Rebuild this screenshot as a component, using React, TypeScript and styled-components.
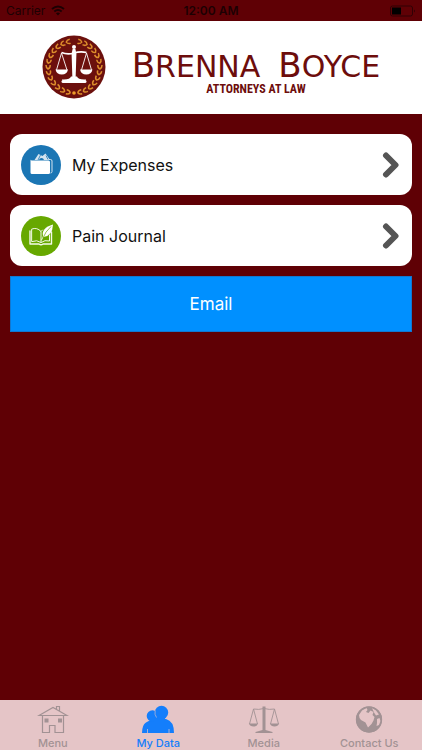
import React from "react";
import styled, { createGlobalStyle } from "styled-components";

const GlobalStyle = createGlobalStyle`
  * { box-sizing: border-box; }
  body { margin: 0; background: #5f0005; font-family: Inter, "Liberation Sans", sans-serif; }
  svg { display: block; flex: none; }
`;

const Screen = styled.div`
  min-height: 100vh;
  display: flex;
  flex-direction: column;
  background: #5f0005;
`;

const StatusBar = styled.div`
  display: grid;
  grid-template-columns: 1fr auto 1fr;
  align-items: center;
  height: 21px;
  padding: 0 6px;
  font-size: 12px;
  line-height: 20px;
  color: #1c0003;
`;

const Carrier = styled.div`
  display: flex;
  align-items: center;
  gap: 6px;
`;

const Clock = styled.time`
  font-weight: 600;
`;

const Battery = styled.div`
  justify-self: end;
`;

const Header = styled.header`
  display: flex;
  align-items: flex-start;
  justify-content: center;
  gap: 26px;
  padding: 14px 0 15px;
  background: #fff;
`;

const Brand = styled.div`
  display: flex;
  flex-direction: column;
  align-items: center;
  padding-top: 15px;
  color: #6d0d0c;
`;

const BrandName = styled.h1`
  display: flex;
  gap: 18px;
  margin: 0;
  font: 400 30px/30px "DejaVu Sans", sans-serif;
`;

const Initial = styled.span`
  font-size: 34px;
`;

const Tagline = styled.p`
  margin: 0;
  font: 700 12px/14px "Roboto Condensed", "Open Sans Condensed", Roboto, sans-serif;
`;

const Content = styled.main`
  flex: 1;
  display: flex;
  flex-direction: column;
  gap: 10px;
  padding: 20px 10px;
`;

const Card = styled.button`
  display: flex;
  align-items: center;
  gap: 11px;
  height: 61px;
  padding: 0 12px 0 11px;
  border: 0;
  border-radius: 12px;
  background: #fff;
  color: #111;
  font: 400 16px/20px Inter, sans-serif;
  text-align: left;
`;

const CardLabel = styled.span`
  flex: 1;
`;

const EmailButton = styled.button`
  height: 56px;
  border: 1px solid #1277cf;
  background: #0090ff;
  color: #fff;
  font: 400 17px/20px Inter, sans-serif;
`;

const TabBar = styled.nav`
  display: grid;
  grid-template-columns: repeat(4, 1fr);
  height: 50px;
  background: #e5c5c7;
`;

const Tab = styled.a<{ $active?: boolean }>`
  display: flex;
  flex-direction: column;
  align-items: center;
  gap: 2px;
  padding-top: 4px;
  color: ${(p) => (p.$active ? "#147efb" : "#a29294")};
  font-size: 11px;
  font-weight: 500;
  line-height: 14px;
  text-decoration: none;
`;

const leaves = Array.from({ length: 28 }, (_, i) => i).filter((i) => i !== 0 && i !== 14);

const SealIcon = () => (
  <svg width="64" height="64" viewBox="0 0 64 64" aria-hidden="true">
    <circle cx="32" cy="32" r="31.5" fill="#6c100d" />
    {leaves.map((i) => {
      const angle = (i * 360) / 28;
      const side = i < 14 ? 1 : -1;
      return (
        <g key={i} transform={`rotate(${angle} 32 32)`}>
          <path
            d={`M${32 - side * 2} 4Q${32 + side * 1} 4 ${32 + side * 2} 6Q${32 + side * 1} 8.4 ${32 - side * 2} 8.2`}
            fill="none" stroke="#dc8d2c" strokeWidth="1.5" />
        </g>
      );
    })}
    <circle cx="32" cy="58" r="1.8" fill="#ee9c2c" />
    <g fill="#fff">
      <circle cx="32" cy="12" r="2" />
      <path d="M30.6 14h2.8l1 5-.8 25h-3.2l-.8-25z" />
      <path d="M20 45.5h24v-1q-8 .5-9-3h-6q-1 3.500-9 3z" />
      <rect x="19.500" y="45" width="25" height="3" rx="1.500" />
      <path d="M13.500 34.500h12.500q-1 5-6.200 5t-6.300-5zM38 34.500h12.500q-1 5-6.200 5t-6.300-5z" />
    </g>
    <path d="M19.500 17.500q6 2.500 12.500.5t12.500-.5" fill="none" stroke="#fff" strokeWidth="1.800" />
    <path d="M19.500 18l-5 17M19.500 18l5.500 17M44.500 18l-5 17M44.500 18l5 17" stroke="#fff" strokeWidth=".9" />
  </svg>
);

const WalletIcon = () => (
  <svg width="40" height="40" viewBox="0 0 40 40" aria-hidden="true">
    <circle cx="20" cy="20" r="20" fill="#1b76b4" />
    <path d="M13.500 15l4-6 4 2 3-2.500L29 15z" fill="#d5e4ef" />
    <path d="M17 15l2.500-5M25 10.500l2 4" stroke="#1b76b4" strokeWidth=".8" />
    <path d="M18 15a2.600 2.600 0 0 1 5 0z" fill="#1b76b4" />
    <path d="M28 14.500h1.500q1.500 0 1.500 1.500v10.500q0 1.500-1.500 1.500" fill="none" stroke="#d5e4ef" strokeWidth="1" />
    <path d="M9.500 14.500q0 1 1.500 1h16.500q1.500 0 1.500 1.500v10.500q0 1.500-1.500 1.500H11q-1.500 0-1.500-1.500z" fill="#fff" />
  </svg>
);

const JournalIcon = () => (
  <svg width="40" height="40" viewBox="0 0 40 40" aria-hidden="true">
    <circle cx="20" cy="20" r="20" fill="#67a800" />
    <g fill="none" stroke="#f4fae9" strokeLinejoin="round" strokeLinecap="round">
      <path d="M11 13q5-2 9 2.500v11q-4-3-9-1zM20 26.500q4-3 8.500-1.500v-6M20 15.500l1.500-1.500" strokeWidth="1" />
      <path d="M9 15v13h9q2 1.500 4 0h8.500V16" strokeWidth="1.400" />
      <path d="M20.500 24l3-6" strokeWidth=".9" />
    </g>
    <path d="M22 20q-2-8 10-11.500Q31.500 20 22.500 21z" fill="#fff" />
    <path d="M22 22q2-6 8-11.500" fill="none" stroke="#67a800" strokeWidth=".7" />
  </svg>
);

const Chevron = () => (
  <svg width="18" height="28" viewBox="0 0 18 28" aria-hidden="true">
    <path d="M4 4.500L13.500 14l-9.500 9.500" fill="none" stroke="#555" strokeWidth="6" strokeLinecap="round" strokeLinejoin="round" />
  </svg>
);

const WifiIcon = () => (
  <svg width="14" height="11" viewBox="0 0 14 11" aria-hidden="true">
    <g fill="none" stroke="#1c0003" strokeWidth="2">
      <path d="M1 4q6-5 12 0M3.300 6.500q3.700-3 7.400 0" />
    </g>
    <path d="M4.900 8.300q2.100-1.600 4.200 0L7 10.500z" fill="#1c0003" />
  </svg>
);

const BatteryIcon = () => (
  <svg width="26" height="12" viewBox="0 0 26 12" aria-hidden="true">
    <rect x=".5" y="1" width="22" height="10" rx="2" fill="none" stroke="#300004" />
    <rect x="2" y="2.500" width="9" height="7" fill="#000" />
    <path d="M24 4.500q2 1.500 0 3z" fill="#300004" />
  </svg>
);

const HouseIcon = () => (
  <svg width="32" height="30" viewBox="0 0 32 30" aria-hidden="true">
    <g fill="none" stroke="currentColor" strokeWidth="1.200">
      <path d="M2 11.500L16 3.500l14 8zM19.500 5V2.500h3V7M5.500 11.500v17h7v-7H18v7h8.500v-17" />
    </g>
    <path d="M7.500 14.500h4v4h-4zM21 14.500h4v4h-4z" fill="currentColor" />
  </svg>
);

const PeopleIcon = () => (
  <svg width="32" height="30" viewBox="0 0 32 30" aria-hidden="true">
    <g fill="currentColor">
      <path d="M0 29q0-8 4-10.500 2-1.500 5-2.500l7-1q3-1.500 8 0 8 2 8 14z" />
      <circle cx="10.500" cy="12" r="5.800" />
      <circle cx="19.500" cy="8.500" r="6.700" />
      <path d="M12 13h11v5H12z" />
    </g>
    <path d="M13.200 6.500q-1 4 1.300 7" fill="none" stroke="#e5c5c7" strokeWidth=".6" />
    <path d="M5.500 29v-4M27 29v-4" stroke="#e5c5c7" strokeWidth=".7" />
  </svg>
);

const ScalesIcon = () => (
  <svg width="32" height="30" viewBox="0 0 32 30" aria-hidden="true">
    <g fill="none" stroke="currentColor" strokeWidth=".9">
      <path d="M5.500 5q5 1 10.500-.5Q21.500 6 26.500 5M5.500 5L1.500 20M5.500 5l4 15M26.500 5l-4 15M26.500 5l4 15" />
    </g>
    <path d="M14.500 2.500h3V26l7 2v1h-17v-1l7-2zM.8 19.500h9.400q-1.200 3-4.700 3t-4.700-3zM21.800 19.500h9.400q-1.200 3-4.700 3t-4.700-3z" fill="currentColor" />
  </svg>
);

const GlobeIcon = () => (
  <svg width="32" height="30" viewBox="0 0 32 30" aria-hidden="true">
    <circle cx="16" cy="15.500" r="13" fill="currentColor" />
    <path d="M6 11l3-4.500 4.500-2.500 1 2-1.500 2 2.500 1 2-2.500 3 1.500-1 3 2 2-1 3.500-2 3.500-3.500 3.500-2.500-5-4.500-2.500q-2-2-2-5z" fill="#e5c5c7" />
    <path d="M19 4l4 2.500 3 4-3 1-2-3zM24 15l2.500-1 1 3-1.500 4-2.500 1 .5-3z" fill="#e5c5c7" />
    <circle cx="16" cy="15.500" r="12.500" fill="none" stroke="currentColor" strokeWidth="1.300" />
  </svg>
);

const tabs = [
  { label: "Menu", Icon: HouseIcon },
  { label: "My Data", Icon: PeopleIcon, active: true },
  { label: "Media", Icon: ScalesIcon },
  { label: "Contact Us", Icon: GlobeIcon },
];

const App: React.FC = () => (
  <Screen>
    <GlobalStyle />
    <StatusBar>
      <Carrier>Carrier <WifiIcon /></Carrier>
      <Clock>12:00 AM</Clock>
      <Battery><BatteryIcon /></Battery>
    </StatusBar>
    <Header>
      <SealIcon />
      <Brand>
        <BrandName>
          <span><Initial>B</Initial>RENNA</span>
          <span><Initial>B</Initial>OYCE</span>
        </BrandName>
        <Tagline>ATTORNEYS AT LAW</Tagline>
      </Brand>
    </Header>
    <Content>
      <Card type="button"><WalletIcon /><CardLabel>My Expenses</CardLabel><Chevron /></Card>
      <Card type="button"><JournalIcon /><CardLabel>Pain Journal</CardLabel><Chevron /></Card>
      <EmailButton type="button">Email</EmailButton>
    </Content>
    <TabBar>
      {tabs.map(({ label, Icon, active }) => (
        <Tab key={label} href="#" $active={active} aria-current={active ? "page" : undefined}>
          <Icon />
          {label}
        </Tab>
      ))}
    </TabBar>
  </Screen>
);

export default App;
